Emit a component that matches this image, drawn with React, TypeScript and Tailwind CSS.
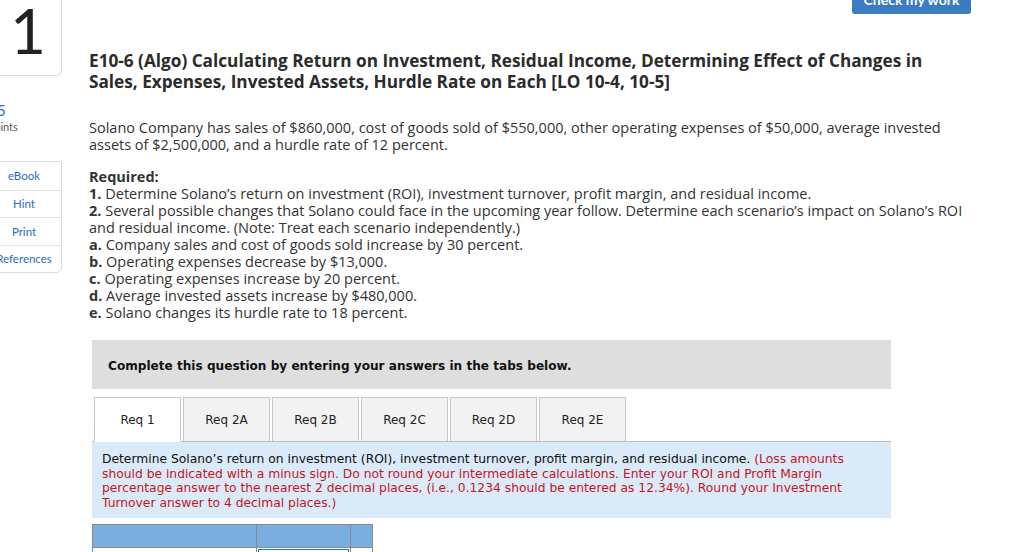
import { useState } from "react";

const tabs = ["Req 1", "Req 2A", "Req 2B", "Req 2C", "Req 2D", "Req 2E"];

const sideLinks = ["eBook", "Hint", "Print", "References"];

const required = [
  { tag: "1.", text: "Determine Solano’s return on investment (ROI), investment turnover, profit margin, and residual income." },
  {
    tag: "2.",
    text: "Several possible changes that Solano could face in the upcoming year follow. Determine each scenario’s impact on Solano’s ROI and residual income. (Note: Treat each scenario independently.)",
  },
  { tag: "a.", text: "Company sales and cost of goods sold increase by 30 percent." },
  { tag: "b.", text: "Operating expenses decrease by $13,000." },
  { tag: "c.", text: "Operating expenses increase by 20 percent." },
  { tag: "d.", text: "Average invested assets increase by $480,000." },
  { tag: "e.", text: "Solano changes its hurdle rate to 18 percent." },
];

const Sidebar = () => (
  <div className="w-[89px] shrink-0 flex flex-col font-['Lato',sans-serif]">
    {/* question number box */}
    <div className="-ml-[20px] w-[82px] h-[76px] border border-t-0 border-[#dcdcdc] rounded-br-md flex justify-center pl-[14px]">
      <span className="text-[62px] leading-[60px] text-[#222] font-normal">1</span>
    </div>
    <div className="-ml-[30px] mt-[24px] flex flex-col">
      <span className="text-[15px] leading-[20px] text-[#2a6ebb] pl-[27px]">5</span>
      <span className="text-[11px] leading-[14px] text-[#555] pl-[18px]">points</span>
    </div>
    <div className="-ml-[14px] mt-[27px] w-[76px] border border-[#dcdcdc] rounded-br-md flex flex-col">
      {sideLinks.map((l, i) => (
        <div
          key={l}
          className={`h-[27.5px] flex items-center justify-center text-[11.5px] text-[#2a6ebb] ${
            i > 0 ? "border-t border-[#e3e3e3]" : ""
          }`}
        >
          {l}
        </div>
      ))}
    </div>
  </div>
);

export default function App() {
  const [active, setActive] = useState(0);

  return (
    <div className="w-[1024px] h-[552px] overflow-hidden bg-white flex">
      <Sidebar />

      <div className="flex-1 min-w-0">
        {/* header button */}
        <div className="h-[14px] flex justify-end pr-[53px]">
          <button className="-mt-[16px] h-[30px] w-[119px] rounded-b-[3px] bg-[#3b7bc0] text-white text-[14px] font-bold font-['Lato',sans-serif]">
            Check my work
          </button>
        </div>

        <h1 className="mt-[36px] pr-[60px] text-[17.2px] leading-[21px] font-bold text-[#2b2b2b] font-['Open_Sans',sans-serif]">
          E10-6 (Algo) Calculating Return on Investment, Residual Income, Determining Effect of Changes in Sales,
          Expenses, Invested Assets, Hurdle Rate on Each [LO 10-4, 10-5]
        </h1>

        <div className="text-[14.5px] leading-[17px] text-[#333] font-['Open_Sans',sans-serif] pr-[50px]">
          <p className="mt-[27px]">
            Solano Company has sales of $860,000, cost of goods sold of $550,000, other operating expenses of $50,000,
            average invested assets of $2,500,000, and a hurdle rate of 12 percent.
          </p>

          <div className="mt-[15px]">
            <div className="font-bold">Required:</div>
            {required.map((r) => (
              <div key={r.tag}>
                <span className="font-bold">{r.tag}</span> {r.text}
              </div>
            ))}
          </div>
        </div>

        {/* instruction banner */}
        <div className="mt-[19px] ml-[3px] w-[799px] h-[49px] bg-[#dedede] flex items-center pl-[16px] pt-[3px]">
          <span className="text-[12.1px] font-bold text-[#111] font-['DejaVu_Sans',Verdana,sans-serif]">
            Complete this question by entering your answers in the tabs below.
          </span>
        </div>

        {/* tabs */}
        <div className="mt-[8px] ml-[3px] w-[799px] flex items-end gap-[2px] pl-[2px] border-b border-[#bdbdbd] font-['DejaVu_Sans',Verdana,sans-serif]">
          {tabs.map((t, i) => (
            <button
              key={t}
              onClick={() => setActive(i)}
              className={`w-[87px] border border-[#c8c8c8] text-[12px] text-[#222] ${
                i === active ? "bg-white border-b-white -mb-[1px] h-[45px]" : "bg-[#f2f2f2] border-b-0 h-[44px]"
              }`}
            >
              {t}
            </button>
          ))}
        </div>

        <div className="ml-[3px] w-[799px] h-[76px] bg-[#dbeaf8] pl-[10px] pr-[34px] pt-[10px] text-[12.3px] leading-[14.5px] font-['DejaVu_Sans',Verdana,sans-serif]">
          <span className="text-[#111]">
            Determine Solano’s return on investment (ROI), investment turnover, profit margin, and residual income.{" "}
          </span>
          <span className="text-[#c4161c]">
            (Loss amounts should be indicated with a minus sign. Do not round your intermediate calculations. Enter
            your ROI and Profit Margin percentage answer to the nearest 2 decimal places, (i.e., 0.1234 should be
            entered as 12.34%). Round your Investment Turnover answer to 4 decimal places.)
          </span>
        </div>

        {/* answer table */}
        <div className="mt-[6px] ml-[3px] w-[281px] border border-[#8a8a8a]">
          <div className="flex h-[22px] bg-[#7aade0]">
            <div className="w-[164px] border-r border-[#8a8a8a]" />
            <div className="w-[94px] border-r border-[#8a8a8a]" />
            <div className="flex-1" />
          </div>
          <div className="flex h-[24px] border-t border-[#8a8a8a]">
            <div className="w-[164px] border-r border-[#8a8a8a]" />
            <div className="w-[94px] border-r border-[#8a8a8a] p-[1px]">
              <div className="h-full border border-[#2a6ebb]" />
            </div>
            <div className="flex-1" />
          </div>
        </div>
      </div>
    </div>
  );
}
